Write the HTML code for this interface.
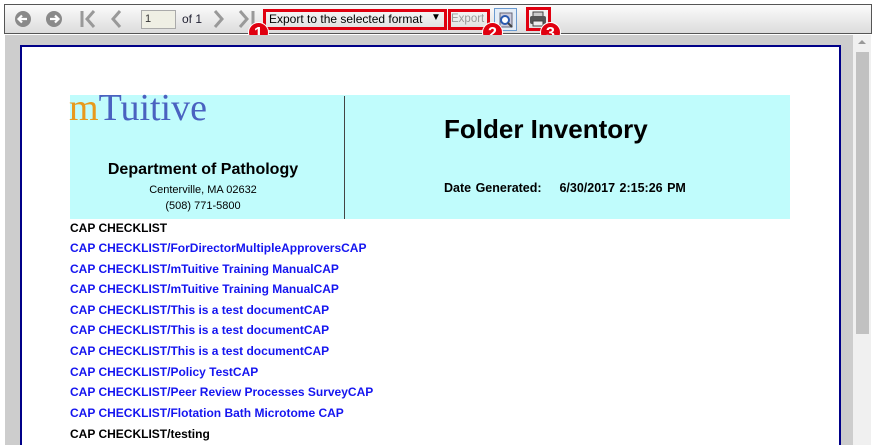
<!DOCTYPE html>
<html style="width:874px;height:445px;overflow:hidden"><head><meta charset="utf-8"><style>
*{margin:0;padding:0;box-sizing:border-box}
body{width:874px;height:445px;overflow:hidden;background:#fff;font-family:"Liberation Sans",Arial,sans-serif;position:relative}
.a{position:absolute}
.tb{left:4px;top:4px;width:868px;height:30px;border:1px solid #555;background:linear-gradient(#fbfbfb,#dcdcdc)}
.red{border:3px solid #e00010}
.badge{width:21px;height:21px;border-radius:50%;background:#e00010;color:#fff;font-weight:bold;font-size:16px;text-align:center;line-height:21px;border:1px solid #fff}
.row{left:70px;font-size:12px;font-weight:bold;color:#1515f0;white-space:nowrap}
</style></head><body>
<div class="a tb"></div>
<svg class="a" style="left:0;top:0" width="260" height="36">
<circle cx="23" cy="19" r="8" fill="#8a8a8a"/><path d="M27 19H19M22 15.5L18.5 19 22 22.5" stroke="#fff" stroke-width="2.2" fill="none"/>
<circle cx="54" cy="19" r="8" fill="#8a8a8a"/><path d="M50 19H58M55 15.5L58.5 19 55 22.5" stroke="#fff" stroke-width="2.2" fill="none"/>
<path d="M82 11V27" stroke="#999" stroke-width="3"/><path d="M94 11L87 19 94 27" stroke="#999" stroke-width="3" fill="none"/>
<path d="M120 11L113 19 120 27" stroke="#999" stroke-width="3" fill="none"/>
<path d="M215 11L222 19 215 27" stroke="#999" stroke-width="3" fill="none"/>
<path d="M240 11L247 19 240 27" stroke="#999" stroke-width="3" fill="none"/><path d="M253 11V27" stroke="#999" stroke-width="3"/>
</svg>
<div class="a" style="left:141px;top:10px;width:35px;height:19px;border:1px solid #aaa;background:#efefe4;font-size:11px;padding:2px 3px;color:#333">1</div>
<div class="a" style="left:182px;top:12px;font-size:12px;color:#223">of 1</div>
<div class="a red" style="left:263px;top:9px;width:184px;height:21px"></div>
<div class="a" style="left:269px;top:12px;font-size:12px;color:#000">Export to the selected format</div>
<div class="a" style="left:431px;top:12px;font-size:10px">▼</div>
<div class="a red" style="left:448px;top:9px;width:42px;height:21px"></div>
<div class="a" style="left:451px;top:13px;font-size:11.5px;color:#999">Export</div>
<div class="a" style="left:494px;top:8px;width:23px;height:23px;border:1px solid #6a9ad0;background:#e4edf7"></div>
<svg class="a" style="left:497px;top:11px" width="18" height="18"><rect x="3" y="2" width="12" height="14" fill="#ccd" stroke="#667"/><circle cx="8" cy="9" r="4" fill="#fff" stroke="#2a5ab0" stroke-width="2"/><path d="M11 12l4 4" stroke="#444" stroke-width="2"/></svg>
<div class="a red" style="left:526px;top:7px;width:25px;height:24px"></div>
<svg class="a" style="left:529px;top:10px" width="18" height="18"><rect x="4" y="2" width="10" height="5" fill="#ccc" stroke="#444"/><rect x="1" y="6" width="16" height="8" rx="2" fill="#555"/><rect x="4" y="11" width="10" height="5" fill="#eee" stroke="#444"/></svg>
<div class="a badge" style="left:248px;top:22px">1</div>
<div class="a badge" style="left:482px;top:22px">2</div>
<div class="a badge" style="left:540px;top:22px">3</div>
<div class="a" style="left:5px;top:35px;width:848px;height:410px;background:#cdcdcd"></div>
<div class="a" style="left:853px;top:35px;width:18px;height:410px;background:#f0f0f0"></div>
<div class="a" style="left:856px;top:52px;width:13px;height:282px;background:#c1c1c1"></div>
<div class="a" style="left:858px;top:40px;width:0;height:0;border-left:4px solid transparent;border-right:4px solid transparent;border-bottom:4px solid #999"></div>
<div class="a" style="left:22px;top:47px;width:828px;height:398px;background:linear-gradient(90deg,#777,#aaa 60%,#cdcdcd)"></div>
<div class="a" style="left:20px;top:45px;width:821px;height:400px;border:2px solid #000088;border-bottom:none;background:#fff"></div>
<div class="a" style="left:70px;top:95px;width:720px;height:124px;background:#c0fcfc"></div>
<div class="a" style="left:344px;top:96px;width:1px;height:123px;background:#444"></div>
<div class="a" style="left:69px;top:86px;font-family:'Liberation Serif',serif;font-size:38px;color:#4a62c0"><span style="color:#e89a1c">m</span>Tuitive</div>
<div class="a" style="left:70px;top:161px;width:266px;text-align:center;font-size:16px;font-weight:bold">Department of Pathology</div>
<div class="a" style="left:70px;top:184px;width:266px;text-align:center;font-size:11px">Centerville, MA 02632</div>
<div class="a" style="left:70px;top:200px;width:266px;text-align:center;font-size:11px">(508) 771-5800</div>
<div class="a" style="left:444px;top:114px;font-size:26px;font-weight:bold">Folder Inventory</div>
<div class="a" style="left:444px;top:181px;font-size:12.5px;font-weight:bold;word-spacing:1px">Date Generated:&nbsp;&nbsp;&nbsp;&nbsp;6/30/2017 2:15:26 PM</div>
<div class="a row" style="top:221px;color:#000">CAP CHECKLIST</div>
<div class="a row" style="top:241px">CAP CHECKLIST/ForDirectorMultipleApproversCAP</div>
<div class="a row" style="top:262px">CAP CHECKLIST/mTuitive Training ManualCAP</div>
<div class="a row" style="top:282px">CAP CHECKLIST/mTuitive Training ManualCAP</div>
<div class="a row" style="top:303px">CAP CHECKLIST/This is a test documentCAP</div>
<div class="a row" style="top:323px">CAP CHECKLIST/This is a test documentCAP</div>
<div class="a row" style="top:344px">CAP CHECKLIST/This is a test documentCAP</div>
<div class="a row" style="top:365px">CAP CHECKLIST/Policy TestCAP</div>
<div class="a row" style="top:385px">CAP CHECKLIST/Peer Review Processes SurveyCAP</div>
<div class="a row" style="top:406px">CAP CHECKLIST/Flotation Bath Microtome CAP</div>
<div class="a row" style="top:427px;color:#000">CAP CHECKLIST/testing</div>
</body></html>
